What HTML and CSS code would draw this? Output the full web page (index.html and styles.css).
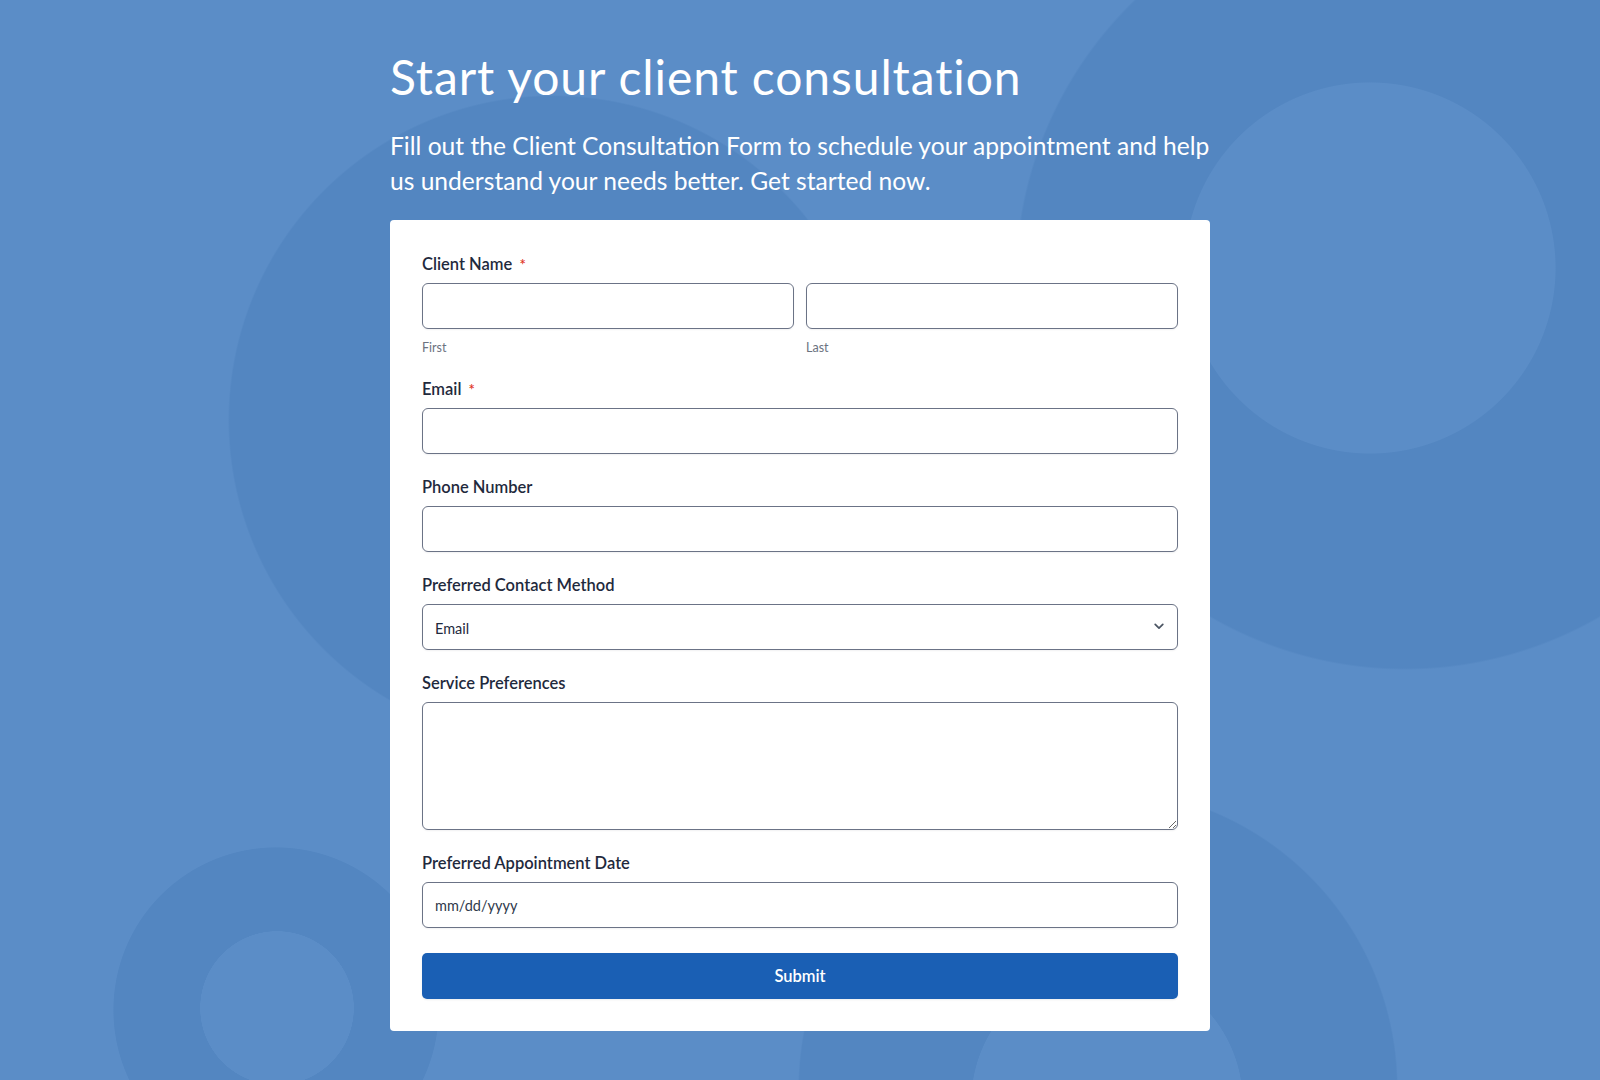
FILE: index.html
```html
<!DOCTYPE html>
<html lang="en">
<head>
<meta charset="utf-8">
<title>Start your client consultation</title>
<link rel="stylesheet" href="styles.css">
</head>
<body>
  <main class="page">
    <header class="intro">
      <h1 class="intro-title">Start your client consultation</h1>
      <p class="intro-text">Fill out the Client Consultation Form to schedule your appointment and help us understand your needs better. Get started now.</p>
    </header>

    <form class="card">
      <div class="field">
        <label class="field-label">Client Name <span class="req">*</span></label>
        <div class="name-row">
          <div class="name-part">
            <input class="control" type="text" aria-label="First">
            <span class="sublabel">First</span>
          </div>
          <div class="name-part">
            <input class="control" type="text" aria-label="Last">
            <span class="sublabel">Last</span>
          </div>
        </div>
      </div>

      <div class="field">
        <label class="field-label" for="email">Email <span class="req">*</span></label>
        <input class="control" id="email" type="email">
      </div>

      <div class="field">
        <label class="field-label" for="phone">Phone Number</label>
        <input class="control" id="phone" type="tel">
      </div>

      <div class="field">
        <label class="field-label" for="method">Preferred Contact Method</label>
        <div class="select-wrap">
          <select class="control select" id="method">
            <option>Email</option>
            <option>Phone</option>
            <option>Text Message</option>
          </select>
          <svg class="chevron" width="10" height="7" viewBox="0 0 10 7" aria-hidden="true">
            <path d="M1.2 1.3 L5 5.2 L8.8 1.3" fill="none" stroke="#4b5563" stroke-width="1.7" stroke-linecap="round" stroke-linejoin="round"/>
          </svg>
        </div>
      </div>

      <div class="field">
        <label class="field-label" for="prefs">Service Preferences</label>
        <textarea class="control area" id="prefs"></textarea>
      </div>

      <div class="field">
        <label class="field-label" for="date">Preferred Appointment Date</label>
        <input class="control" id="date" type="text" placeholder="mm/dd/yyyy">
      </div>

      <button class="submit" type="button">Submit</button>
    </form>
  </main>
</body>
</html>
```

FILE: styles.css
```css
html, body {
  margin: 0;
  padding: 0;
}

body {
  min-height: 1080px;
  font-family: "Lato", "Noto Sans", "Liberation Sans", sans-serif;
  background-color: #5b8dc7;
  /* decorative rings: inner light discs sit above their darker outer discs */
  background-image:
    radial-gradient(circle 77px at 277px 1008px, #5b8dc7 99.5%, transparent 100%),
    radial-gradient(circle 163px at 276px 1010px, #5386c1 99.5%, transparent 100%),
    radial-gradient(circle 136px at 1107px 1102px, #5b8dc7 99.5%, transparent 100%),
    radial-gradient(circle 300px at 1098px 1088px, #5386c1 99.5%, transparent 100%),
    radial-gradient(circle 186px at 1370px 268px, #5b8dc7 99.5%, transparent 100%),
    radial-gradient(circle 390px at 1405px 280px, #5386c1 99.5%, transparent 100%),
    radial-gradient(circle 325px at 553px 420px, #5386c1 99.5%, transparent 100%);
  background-repeat: no-repeat;
}

.page {
  width: 820px;
  margin: 0 auto;
  padding-top: 48px;
  padding-bottom: 40px;
}

.intro-title {
  margin: 0;
  font-size: 48px;
  font-weight: 400;
  line-height: 1.2;
  color: #ffffff;
  letter-spacing: 0.9px;
}

.intro-text {
  margin: 22px 0 0;
  font-size: 24.6px;
  line-height: 35px;
  color: #ffffff;
}

.card {
  margin-top: 22px;
  background: #ffffff;
  border-radius: 4px;
  padding: 32px;
  display: flex;
  flex-direction: column;
  gap: 21px;
}

.field {
  display: flex;
  flex-direction: column;
}

.field-label {
  font-size: 16.5px;
  line-height: 24px;
  font-weight: 600;
  color: #1f2a3d;
  margin-bottom: 7px;
}

.req {
  color: #e0331f;
  font-size: 15px;
  line-height: 1;
  margin-left: 3px;
}

.name-row {
  display: grid;
  grid-template-columns: 1fr 1fr;
  gap: 12px;
}

.name-part {
  display: flex;
  flex-direction: column;
}

.sublabel {
  margin-top: 10px;
  font-size: 12.5px;
  line-height: 17px;
  color: #6b7280;
}

.control {
  box-sizing: border-box;
  width: 100%;
  height: 46px;
  margin: 0;
  padding: 0 12px;
  border: 1px solid #6b7386;
  border-radius: 6px;
  background: #ffffff;
  box-shadow: 0 1px 2px rgba(16, 24, 40, 0.06);
  font-family: "Lato", "Noto Sans", sans-serif;
  font-size: 14.5px;
  color: #1f2a3d;
  outline: none;
}

.control::placeholder {
  color: #2f3a4c;
  opacity: 1;
}

.select-wrap {
  position: relative;
}

.select {
  appearance: none;
  -webkit-appearance: none;
  padding-right: 36px;
  padding-top: 3px;
}

.chevron {
  position: absolute;
  right: 14px;
  top: 19px;
  pointer-events: none;
}

.area {
  height: 128px;
  padding: 10px 12px;
  resize: vertical;
}

#date {
  padding-top: 2px;
}

.submit {
  margin-top: 4px;
  height: 46px;
  border: 0;
  border-radius: 5px;
  background: #1a5fb4;
  color: #ffffff;
  font-family: "Lato", "Noto Sans", sans-serif;
  font-size: 16.5px;
  font-weight: 600;
  box-shadow: 0 1px 2px rgba(16, 24, 40, 0.08);
  cursor: pointer;
}
```
